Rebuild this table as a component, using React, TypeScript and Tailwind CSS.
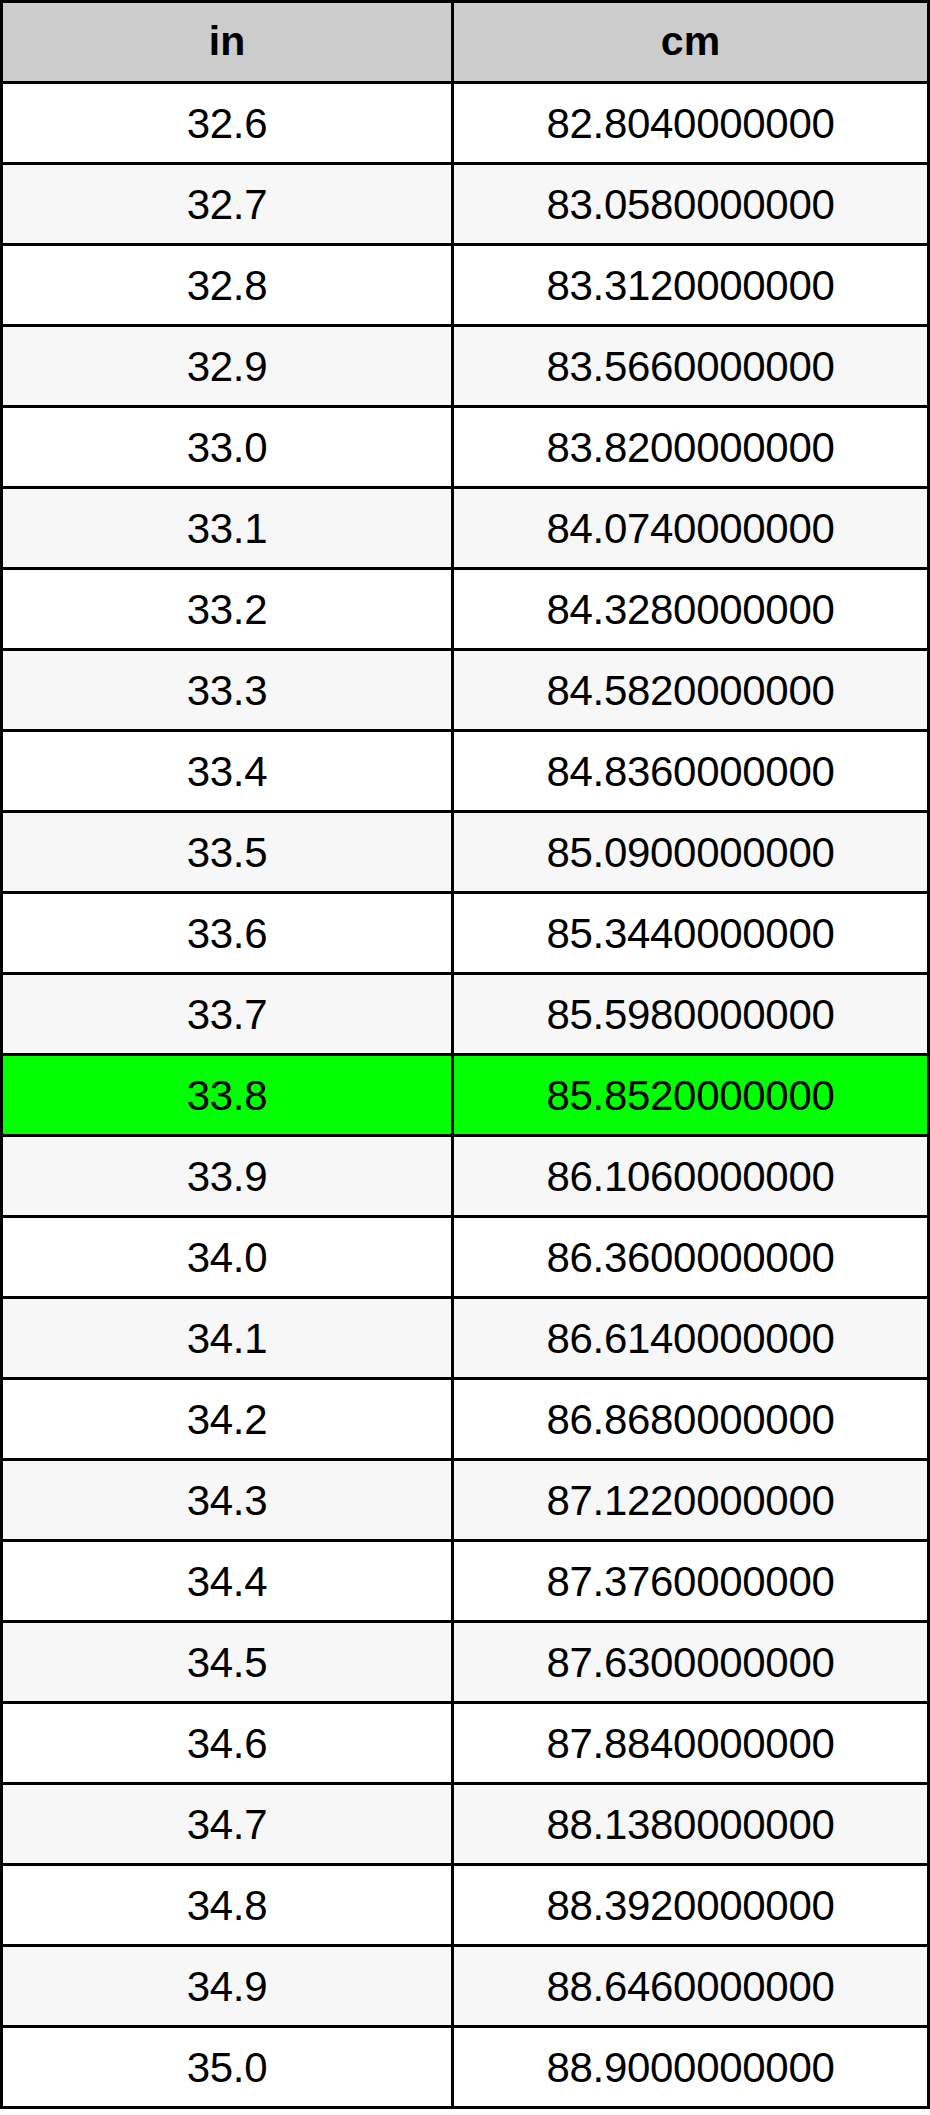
const rows: [string, string][] = [
  ["32.6", "82.8040000000"],
  ["32.7", "83.0580000000"],
  ["32.8", "83.3120000000"],
  ["32.9", "83.5660000000"],
  ["33.0", "83.8200000000"],
  ["33.1", "84.0740000000"],
  ["33.2", "84.3280000000"],
  ["33.3", "84.5820000000"],
  ["33.4", "84.8360000000"],
  ["33.5", "85.0900000000"],
  ["33.6", "85.3440000000"],
  ["33.7", "85.5980000000"],
  ["33.8", "85.8520000000"],
  ["33.9", "86.1060000000"],
  ["34.0", "86.3600000000"],
  ["34.1", "86.6140000000"],
  ["34.2", "86.8680000000"],
  ["34.3", "87.1220000000"],
  ["34.4", "87.3760000000"],
  ["34.5", "87.6300000000"],
  ["34.6", "87.8840000000"],
  ["34.7", "88.1380000000"],
  ["34.8", "88.3920000000"],
  ["34.9", "88.6460000000"],
  ["35.0", "88.9000000000"],
];

const HIGHLIGHT = "33.8";

function rowBg(index: number, value: string) {
  if (value === HIGHLIGHT) return "bg-[#00ff00]";
  return index % 2 === 0 ? "bg-white" : "bg-[#f7f7f7]";
}

export default function App() {
  return (
    <div className="w-[930px] min-h-[2115px] bg-white font-['Liberation_Sans',Arial,sans-serif] text-black">
      <div className="grid grid-cols-[448px_473px] auto-rows-[78px] gap-[3px] bg-black p-[3px] w-[930px]">
        <div className="bg-[#cccccc] flex items-center justify-center text-[41px] font-bold">
          in
        </div>
        <div className="bg-[#cccccc] flex items-center justify-center text-[41px] font-bold">
          cm
        </div>
        {rows.map(([inch, cm], i) => (
          <div key={inch} className="contents">
            <div className={`${rowBg(i, inch)} flex items-center justify-center text-[42px] tracking-[-0.3px]`}>
              {inch}
            </div>
            <div className={`${rowBg(i, inch)} flex items-center justify-center text-[42px] tracking-[-0.3px]`}>
              {cm}
            </div>
          </div>
        ))}
      </div>
    </div>
  );
}
